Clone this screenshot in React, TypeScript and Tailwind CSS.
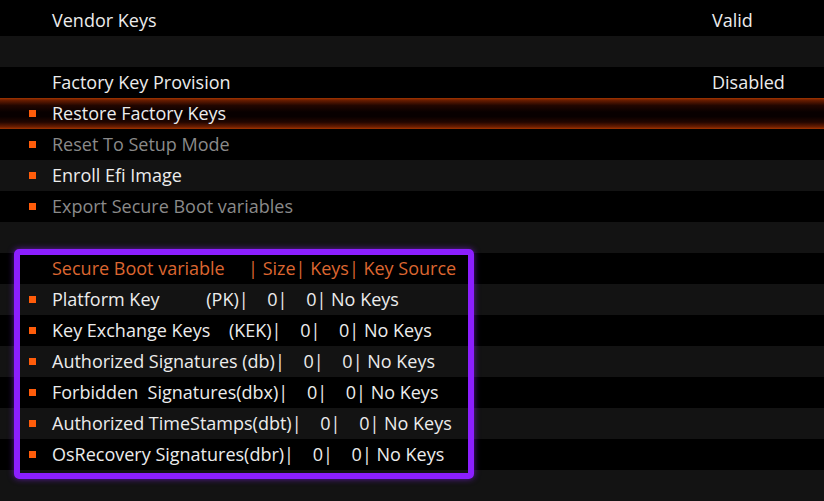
type Row = {
  label: string
  value?: string
  bullet?: boolean
  tone?: 'white' | 'dim' | 'head'
  selected?: boolean
}

const rows: Row[] = [
  { label: 'Vendor Keys', value: 'Valid' },
  { label: '' },
  { label: 'Factory Key Provision', value: 'Disabled' },
  { label: 'Restore Factory Keys', bullet: true, selected: true },
  { label: 'Reset To Setup Mode', bullet: true, tone: 'dim' },
  { label: 'Enroll Efi Image', bullet: true },
  { label: 'Export Secure Boot variables', bullet: true, tone: 'dim' },
  { label: '' },
  { label: 'Secure Boot variable     | Size| Keys| Key Source', tone: 'head' },
  { label: 'Platform Key          (PK)|    0|    0| No Keys', bullet: true },
  { label: 'Key Exchange Keys    (KEK)|    0|    0| No Keys', bullet: true },
  { label: 'Authorized Signatures (db)|    0|    0| No Keys', bullet: true },
  { label: 'Forbidden  Signatures(dbx)|    0|    0| No Keys', bullet: true },
  { label: 'Authorized TimeStamps(dbt)|    0|    0| No Keys', bullet: true },
  { label: 'OsRecovery Signatures(dbr)|    0|    0| No Keys', bullet: true },
  { label: '' },
]

const toneClass = {
  white: 'text-[#ececec]',
  dim: 'text-[#8a8a8a]',
  head: 'text-[#dc6630]',
}

export default function App() {
  return (
    <div
      className="relative w-[824px] h-[501px] overflow-hidden bg-black pt-[5px] text-[18px] leading-none"
      style={{ fontFamily: '"Open Sans", "Noto Sans", sans-serif' }}
    >
      {rows.map((r, i) => {
        const bg = r.selected
          ? 'bg-[linear-gradient(to_bottom,#a33500_0%,#6a1d00_7%,#220600_24%,#080000_45%,#080000_60%,#220600_78%,#6a1d00_93%,#a33500_100%)]'
          : i % 2 === 0
            ? 'bg-black'
            : 'bg-[#131313]'
        return (
          <div key={i} className={`flex items-center h-[31px] ${bg}`}>
            <div className="w-[52px] shrink-0 flex items-center pl-[29px]">
              {r.bullet && <span className="block w-[7px] h-[7px] bg-[#ff5c0a]" />}
            </div>
            <div className={`flex-1 whitespace-pre pb-[1px] ${toneClass[r.tone ?? 'white']}`}>{r.label}</div>
            <div className="w-[112px] shrink-0 pb-[1px] text-[#ececec]">{r.value}</div>
          </div>
        )
      })}

      {/* highlight frame */}
      <div className="absolute left-[14px] top-[249px] w-[460px] h-[230px] rounded-[5px] border-[6px] border-[#8c1fff] shadow-[0_0_6px_rgba(140,31,255,0.6)] pointer-events-none" />
    </div>
  )
}
